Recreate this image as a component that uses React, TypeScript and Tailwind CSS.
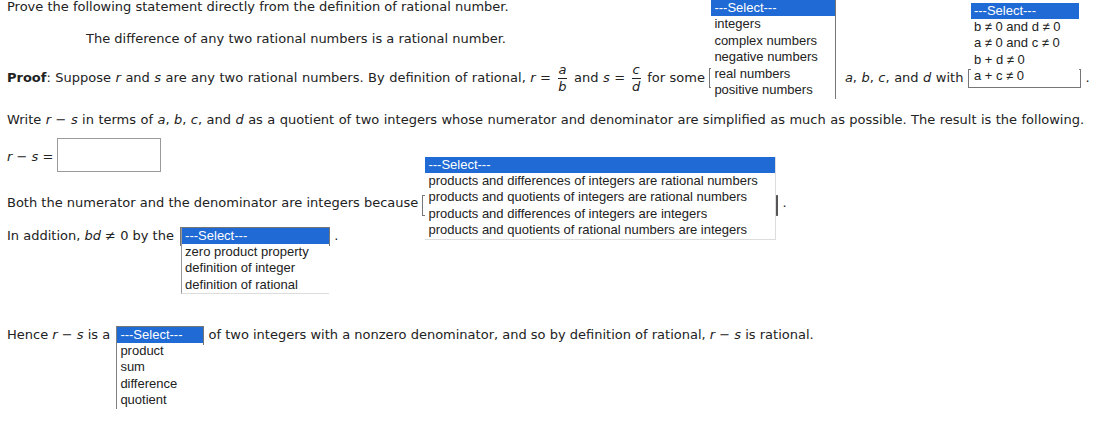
import React from 'react';

function Select({ box, list, options }: { box: string; list: string; options: string[] }) {
  return (
    <span className={`relative inline-block align-middle border border-[#767676] ${box}`}>
      <span className={`absolute z-10 bg-white font-['Liberation_Sans',Arial,sans-serif] text-[13px] text-[#222] [word-spacing:0] ${list}`}>
        <span className="block h-[16px] bg-[#1f6ad4] pl-[3px] leading-[16px] text-white">---Select---</span>
        {options.map((o) => (
          <span key={o} className="block h-[16.5px] whitespace-nowrap pl-[3px] leading-[16.5px]">
            {o}
          </span>
        ))}
      </span>
    </span>
  );
}

function Frac({ n, d }: { n: string; d: string }) {
  return (
    <span className="mx-[2px] inline-flex flex-col items-center align-middle text-[13px] italic leading-[16px]">
      <span className="px-[1px]">{n}</span>
      <span className="h-px w-[9px] bg-[#222]" />
      <span>{d}</span>
    </span>
  );
}

export default function App() {
  return (
    <div className="h-[428px] w-[1109px] overflow-hidden bg-white px-[7px] font-['DejaVu_Sans',Verdana,sans-serif] text-[13px] text-[#222]">
      <div className="flex h-[13px] items-center">
        <span className="whitespace-nowrap leading-[15px]">
          Prove the following statement directly from the definition of rational number.
        </span>
      </div>

      <div className="mt-[17px] flex h-[16px] items-center pl-[79px]">
        <span className="whitespace-nowrap leading-[15px]">
          The difference of any two rational numbers is a rational number.
        </span>
      </div>

      <div className="mt-[16px] flex h-[32px] items-center">
        <span className="whitespace-nowrap leading-[15px] [word-spacing:0.35px]">
          <b>Proof</b>: Suppose <i>r</i> and <i>s</i> are any two rational numbers. By definition of rational, <i>r</i> ={' '}
          <Frac n="a" d="b" /> and <i>s</i> = <Frac n="c" d="d" /> for some{' '}
          <Select
            box="h-[20px] w-[127px] mr-[4px]"
            list="left-[1px] top-[-69px] w-[125px] border-r border-[#777]"
            options={['integers', 'complex numbers', 'negative numbers', 'real numbers', 'positive numbers']}
          />{' '}
          <i>a</i>, <i>b</i>, <i>c</i>, and <i>d</i> with{' '}
          <Select
            box="h-[19px] w-[113px]"
            list="left-[2px] top-[-67px] w-[108px]"
            options={['b ≠ 0 and d ≠ 0', 'a ≠ 0 and c ≠ 0', 'b + d ≠ 0', 'a + c ≠ 0']}
          />{' '}
          .
        </span>
      </div>

      <div className="mt-[17px] flex h-[16px] items-center">
        <span className="whitespace-nowrap leading-[15px] [word-spacing:0.3px]">
          Write <i>r</i> − <i>s</i> in terms of <i>a</i>, <i>b</i>, <i>c</i>, and <i>d</i> as a quotient of two integers whose
          numerator and denominator are simplified as much as possible. The result is the following.
        </span>
      </div>

      <div className="mt-[11px] flex h-[34px] items-center">
        <span className="whitespace-nowrap leading-[15px]">
          <span className="relative top-[2px]">
            <i>r</i> − <i>s</i> =
          </span>{' '}
          <span className="inline-block h-[34px] w-[104px] align-middle border border-[#9a9a9a]" />
        </span>
      </div>

      <div className="mt-[22px] flex h-[18px] items-center">
        <span className="whitespace-nowrap leading-[15px]">
          Both the numerator and the denominator are integers because{' '}
          <Select
            box="h-[21px] w-[356px] border-r-2 border-r-[#555] translate-y-[2px]"
            list="left-[2px] top-[-39px] w-[351px] border-r border-b border-[#ddd]"
            options={[
              'products and differences of integers are rational numbers',
              'products and quotients of integers are rational numbers',
              'products and differences of integers are integers',
              'products and quotients of rational numbers are integers',
            ]}
          />{' '}
          .
        </span>
      </div>

      <div className="mt-[16px] flex h-[16px] items-center">
        <span className="whitespace-nowrap leading-[15px]">
          In addition, <i>bd</i> ≠ 0 by the{' '}
          <Select
            box="h-[19px] w-[150px] ml-[2px]"
            list="left-0 top-0 w-[148px] border-l border-b border-l-[#999] border-b-[#ddd]"
            options={['zero product property', 'definition of integer', 'definition of rational']}
          />{' '}
          .
        </span>
      </div>

      <div className="mt-[83px] flex h-[16px] items-center">
        <span className="whitespace-nowrap leading-[15px]">
          Hence <i>r</i> − <i>s</i> is a{' '}
          <Select
            box="h-[19px] w-[88px] ml-[2px]"
            list="left-[-1px] top-0 w-[87px] border-l border-[#808080]"
            options={['product', 'sum', 'difference', 'quotient']}
          />{' '}
          of two integers with a nonzero denominator, and so by definition of rational, <i>r</i> − <i>s</i> is rational.
        </span>
      </div>
    </div>
  );
}
